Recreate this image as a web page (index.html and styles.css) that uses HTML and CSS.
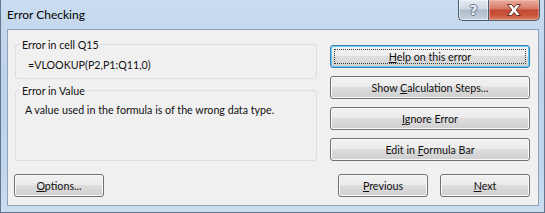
FILE: index.html
```html
<!DOCTYPE html>
<html lang="en">
<head>
<meta charset="utf-8">
<title>Error Checking</title>
<link rel="stylesheet" href="styles.css">
</head>
<body>
<div class="window">
  <div class="titlebar">
    <span class="title">Error Checking</span>
    <div class="caps">
      <div class="cap cap-help"><span class="qmark">?</span></div>
      <div class="cap cap-close">
        <svg width="18" height="12" viewBox="0 0 18 12">
          <polygon points="2.5,0.5 6.5,0.5 9,3.5 11.5,0.5 15.5,0.5 11.2,6 15.5,11.5 11.5,11.5 9,8.5 6.5,11.5 2.5,11.5 6.8,6" fill="#ffffff" stroke="#6b3126" stroke-width="1" stroke-linejoin="round"/>
        </svg>
      </div>
    </div>
  </div>
  <div class="client">
    <div class="main">
      <div class="groups">
        <fieldset class="group g1">
          <legend>Error in cell Q15</legend>
          <div class="formula">=VLOOKUP(P2,P1:Q11,0)</div>
        </fieldset>
        <fieldset class="group g2">
          <legend>Error in Value</legend>
          <div class="desc">A value used in the formula is of the wrong data type.</div>
        </fieldset>
      </div>
      <div class="actions">
        <button class="btn focused"><u>H</u>elp on this error</button>
        <button class="btn">Show <u>C</u>alculation Steps...</button>
        <button class="btn"><u>I</u>gnore Error</button>
        <button class="btn">Edit in <u>F</u>ormula Bar</button>
      </div>
    </div>
    <div class="footer">
      <button class="btn small"><u>O</u>ptions...</button>
      <div class="nav">
        <button class="btn small"><u>P</u>revious</button>
        <button class="btn small"><u>N</u>ext</button>
      </div>
    </div>
  </div>
</div>
</body>
</html>
```

FILE: styles.css
```css
* { box-sizing: border-box; }
html, body { margin: 0; padding: 0; }
body {
  width: 545px;
  height: 213px;
  overflow: hidden;
  font-family: "Segoe UI", Lato, "Open Sans", sans-serif;
  font-size: 10.7px;
  color: #111;
  background: #bcd3ea;
}
.window {
  width: 545px;
  height: 213px;
  display: flex;
  flex-direction: column;
  background: linear-gradient(180deg, #cadcef 0%, #bdd3ea 35%, #bfd5eb 75%, #cadcef 100%);
  border: 1px solid #62778f;
  border-top: 0;
}
.titlebar {
  height: 29px;
  flex: none;
  display: flex;
  justify-content: space-between;
  align-items: flex-start;
  padding-right: 4px;
}
.title {
  padding: 7px 0 0 6px;
  font-size: 12px;
  line-height: 16px;
  color: #000;
}
.caps { display: flex; }
.cap {
  height: 21px;
  display: flex;
  align-items: center;
  justify-content: center;
  border: 1px solid #4d5d72;
  border-top: 0;
}
.cap-help {
  width: 30px;
  border-right: 0;
  border-radius: 0 0 0 5px;
  background: linear-gradient(180deg, #e4eaf1 0%, #cfd8e2 45%, #aebccb 50%, #bccad8 85%, #cbd6e2 100%);
  box-shadow: inset 0 0 0 1px rgba(255,255,255,0.45);
}
.qmark {
  font-family: "DejaVu Sans", sans-serif;
  font-weight: bold;
  font-size: 14px;
  line-height: 14px;
  color: #eef1f5;
  text-shadow: 1px 0 0 #6a7787, -1px 0 0 #6a7787, 0 1px 0 #6a7787, 0 -1px 0 #6a7787;
}
.cap-close {
  width: 52px;
  border-radius: 0 0 5px 0;
  background: linear-gradient(180deg, #e8ab9d 0%, #d87d6a 42%, #c54a35 50%, #c8533a 75%, #db7f62 100%);
  box-shadow: inset 0 0 0 1px rgba(255,220,210,0.35);
}
.client {
  height: 177px;
  margin: 0 5px 0 6px;
  background: #f0f0f0;
  border: 1px solid #8fa3bb;
  display: flex;
  flex-direction: column;
}
.main {
  display: flex;
  gap: 13px;
  padding: 7px 8px 0 7px;
}
.groups {
  width: 302px;
  display: flex;
  flex-direction: column;
  gap: 4px;
}
.group {
  margin: 0;
  padding: 0 0 0 4px;
  min-width: 0;
  border: 1px solid #d5dfe5;
  border-radius: 3px;
}
.group legend {
  padding: 0 2px;
  line-height: 15px;
}
.g1 { height: 42px; }
.g2 { height: 78px; }
.formula {
  margin: 5px 0 0 8px;
  line-height: 15px;
}
.desc {
  margin: 4px 0 0 5px;
  line-height: 15px;
}
.actions {
  width: 200px;
  display: flex;
  flex-direction: column;
  gap: 8px;
  padding-top: 8px;
}
.btn {
  position: relative;
  height: 23px;
  margin: 0;
  padding: 0;
  font: inherit;
  color: #111;
  text-align: center;
  line-height: 21px;
  border: 1px solid #707070;
  border-radius: 3px;
  background: linear-gradient(180deg, #f2f2f2 0%, #ebebeb 50%, #dddddd 50%, #cfcfcf 100%);
  box-shadow: inset 0 0 0 1px #fbfbfb;
}
.btn u { text-underline-offset: 1px; }
.btn.focused {
  border-color: #3c7fb1;
  box-shadow: inset 0 0 0 1px #5fcbf6;
  background: linear-gradient(180deg, #f4f4f4 0%, #ededed 50%, #dedede 50%, #d2d2d2 100%);
}
.btn.focused::after {
  content: "";
  position: absolute;
  top: 3px;
  left: 3px;
  right: 3px;
  bottom: 3px;
  border: 1px dotted #3a3a3a;
}
.footer {
  display: flex;
  justify-content: space-between;
  margin-top: 13px;
  padding: 0 8px 0 6px;
}
.nav {
  display: flex;
  gap: 12px;
}
.btn.small { width: 90px; }
```
